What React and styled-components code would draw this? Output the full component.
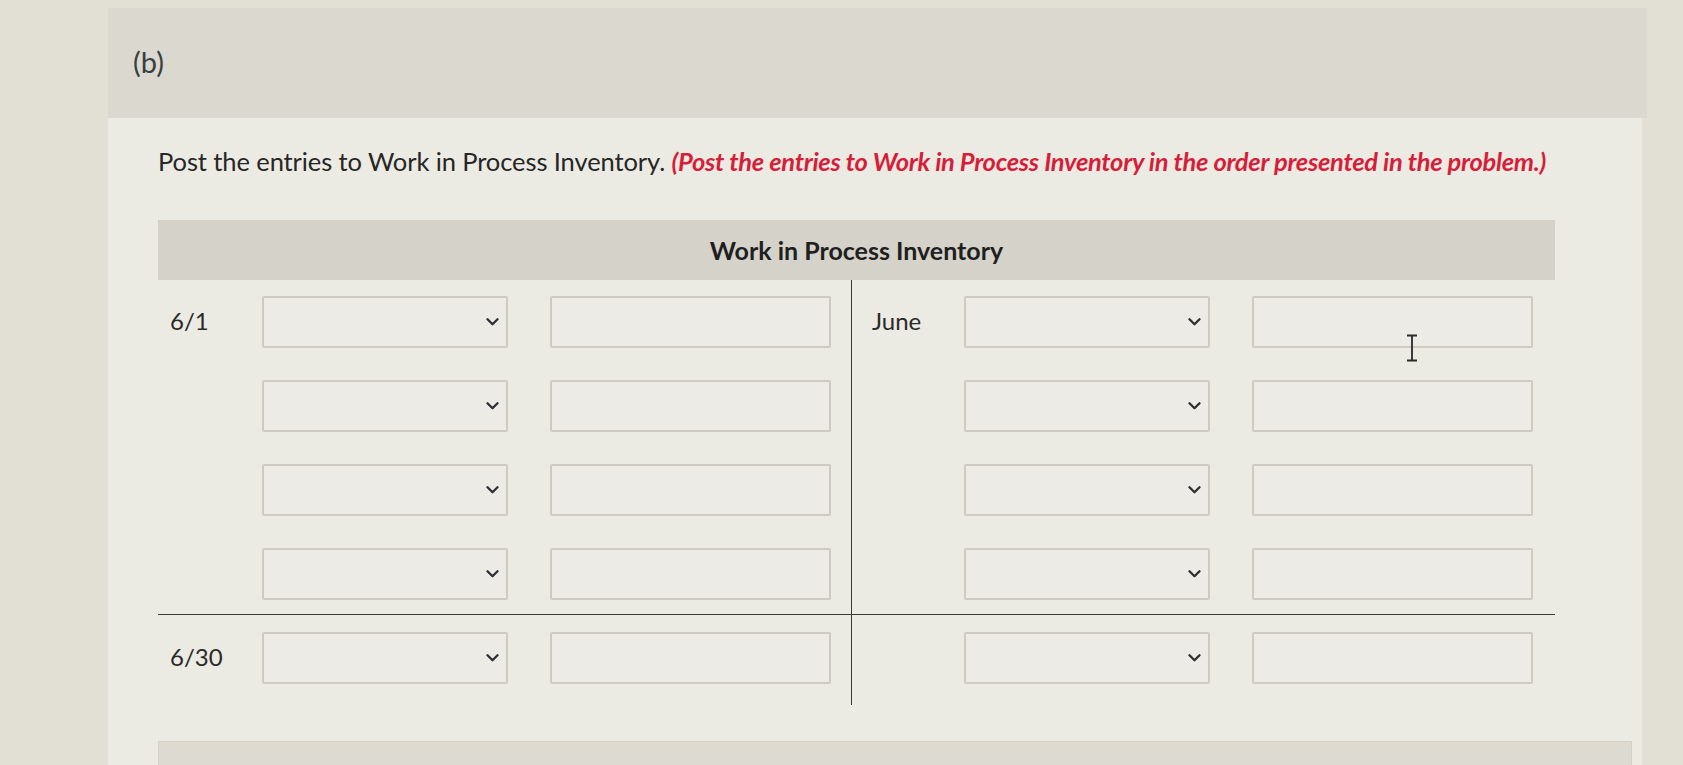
import React from "react";
import styled, { createGlobalStyle } from "styled-components";

const GlobalStyle = createGlobalStyle`
  html, body {
    margin: 0;
    padding: 0;
    background: #e2dfd5;
    font-family: Lato, "Open Sans", "Liberation Sans", sans-serif;
    color: #2d2d2d;
  }
  * { box-sizing: border-box; }
`;

const Page = styled.div`
  width: 1683px;
  height: 765px;
  overflow: hidden;
  padding: 8px 0 0 108px;
`;

const Card = styled.div`
  width: 1539px;
  display: flex;
  flex-direction: column;
`;

const PartBand = styled.div`
  height: 110px;
  background: #dbd8cf;
  display: flex;
  align-items: center;
  padding: 0 0 4px 25px;
  font-size: 29px;
  color: #3a3e44;
`;

const Content = styled.div`
  width: 1534px;
  background: #ecebe3;
  padding: 28px 0 0 50px;
  min-height: 660px;
`;

const Instruction = styled.p`
  margin: 0;
  font-size: 25.5px;
  line-height: 1.2;
  color: #262626;
  white-space: nowrap;
  letter-spacing: -0.1px;
`;

const Note = styled.span`
  color: #d51f3a;
  font-weight: 700;
  font-style: italic;
  letter-spacing: -0.3px;
`;

const Account = styled.div`
  width: 1397px;
  margin-top: 43px;
`;

const AccountHead = styled.div`
  height: 60px;
  background: #d4d2c9;
  display: flex;
  align-items: center;
  justify-content: center;
  font-size: 25px;
  font-weight: 700;
  color: #1f1f1f;
`;

const Section = styled.div`
  display: grid;
  grid-template-columns: 694px 703px;
  border-top: ${(p) => (p.$ruled ? "1.5px solid #3a3a36" : "none")};
`;

const Side = styled.div`
  display: grid;
  grid-template-columns: 50px 246px 281px;
  column-gap: 42px;
  row-gap: 32px;
  align-content: start;
  padding: ${(p) => p.$pt}px 0 ${(p) => p.$pb}px ${(p) => p.$pl}px;
  border-right: ${(p) => (p.$divider ? "1.5px solid #3a3a36" : "none")};
`;

const Label = styled.div`
  font-size: 24px;
  align-self: center;
  color: #2a2a2a;
  white-space: nowrap;
  padding-bottom: 2px;
`;

const Field = styled.div`
  position: relative;
  height: 52px;
`;

const Select = styled.select`
  appearance: none;
  -webkit-appearance: none;
  width: 100%;
  height: 100%;
  border: 2px solid #cdcac1;
  border-radius: 2px;
  background: #edebe5;
  font-family: inherit;
  font-size: 18px;
  color: #2d2d2d;
  padding: 0 34px 0 10px;
  outline: none;
`;

const Chevron = styled.svg`
  position: absolute;
  right: 9px;
  top: 50%;
  margin-top: -4px;
  pointer-events: none;
`;

const TextInput = styled.input`
  width: 100%;
  height: 100%;
  border: 2px solid #cdcac1;
  border-radius: 2px;
  background: #edebe5;
  font-family: inherit;
  font-size: 18px;
  padding: 0 10px;
  outline: none;
`;

const IBeam = styled.svg`
  position: absolute;
  left: 152px;
  top: 38px;
  pointer-events: none;
`;

const NextPart = styled.div`
  width: 1474px;
  height: 40px;
  margin-top: 36px;
  background: #dcdad1;
  border: 1px solid #d2d0c7;
`;

const ChevronIcon = () => (
  <Chevron width="13" height="8" viewBox="0 0 13 8">
    <path d="M1.5 1.3 L6.5 6.2 L11.5 1.3" fill="none" stroke="#2e2e2e" strokeWidth="2.3" strokeLinecap="round" strokeLinejoin="round" />
  </Chevron>
);

const DropDown = () => (
  <Field>
    <Select defaultValue="">
      <option value=""></option>
    </Select>
    <ChevronIcon />
  </Field>
);

const Amount = ({ cursor }) => (
  <Field>
    <TextInput type="text" />
    {cursor && (
      <IBeam width="16" height="28" viewBox="0 0 16 28">
        <path d="M3 1.5 H13 M8 1.5 V26.5 M3 26.5 H13" fill="none" stroke="#2a2a2a" strokeWidth="1.8" />
      </IBeam>
    )}
  </Field>
);

const Rows = ({ labels, cursorRow }) =>
  labels.map((l, i) => (
    <React.Fragment key={i}>
      <Label>{l}</Label>
      <DropDown />
      <Amount cursor={i === cursorRow} />
    </React.Fragment>
  ));

export default function App() {
  return (
    <>
      <GlobalStyle />
      <Page>
        <Card>
          <PartBand>(b)</PartBand>
          <Content>
            <Instruction>
              Post the entries to Work in Process Inventory.{" "}
              <Note>(Post the entries to Work in Process Inventory in the order presented in the problem.)</Note>
            </Instruction>
            <Account>
              <AccountHead>Work in Process Inventory</AccountHead>
              <Section>
                <Side $divider $pt={16} $pb={14} $pl={12}>
                  <Rows labels={["6/1", "", "", ""]} />
                </Side>
                <Side $pt={16} $pb={14} $pl={20}>
                  <Rows labels={["June", "", "", ""]} cursorRow={0} />
                </Side>
              </Section>
              <Section $ruled>
                <Side $divider $pt={17} $pb={21} $pl={12}>
                  <Rows labels={["6/30"]} />
                </Side>
                <Side $pt={17} $pb={21} $pl={20}>
                  <Rows labels={[""]} />
                </Side>
              </Section>
            </Account>
            <NextPart />
          </Content>
        </Card>
      </Page>
    </>
  );
}
